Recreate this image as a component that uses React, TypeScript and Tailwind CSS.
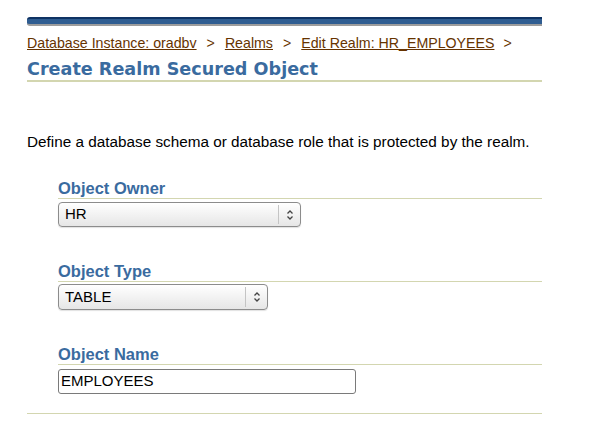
import React from 'react';

const labelCls =
    "h-[21px] border-b border-[#d3d6b0] text-[16.5px] leading-[20px] font-bold text-[#3a6b9f] font-['Liberation_Sans',Arial,sans-serif]";

function UpDown() {
    return (
        <svg width="8" height="12" viewBox="0 0 8 12" fill="none" stroke="#444" strokeWidth="1.3">
            <path d="M1.5 4.5 L4 2 L6.5 4.5" />
            <path d="M1.5 7.5 L4 10 L6.5 7.5" />
        </svg>
    );
}

function SelectBox({ value, width, height }: { value: string; width: string; height: string }) {
    return (
        <div
            className={`${width} ${height} flex items-stretch rounded-[4px] border border-[#8c8c8c] bg-gradient-to-b from-white to-[#e6e6e6] shadow-[0_1px_1px_rgba(0,0,0,0.12)]`}
        >
            <div className="flex-1 flex items-center pl-[6px] text-[15px] text-black">{value}</div>
            <div className="w-[22px] flex items-center justify-center border-l border-[#c4c4c4] my-[2px]">
                <UpDown />
            </div>
        </div>
    );
}

export default function App() {
    return (
        <div className="w-[593px] h-[429px] bg-white overflow-hidden font-['Liberation_Sans',Arial,sans-serif]">
            <div className="ml-[27px] w-[515px] pt-[17px] flex flex-col">
                {/* top bar */}
                <div className="h-[9px] border-t-2 border-t-[#0f3363] bg-[#2f5d91] border-b-2 border-b-[#9c9c9c] rounded-l-[3px]" />

                {/* breadcrumb */}
                <div className="mt-[9px] flex items-center text-[14.2px] leading-[17px] text-[#663300]">
                    <span className="underline">Database Instance: oradbv</span>
                    <span className="mx-[10px]">&gt;</span>
                    <span className="underline">Realms</span>
                    <span className="mx-[10px]">&gt;</span>
                    <span className="underline">Edit Realm: HR_EMPLOYEES</span>
                    <span className="ml-[9px]">&gt;</span>
                </div>

                {/* title */}
                <h1 className="mt-[6px] h-[24px] border-b-2 border-[#d3d6b0] text-[17.6px] leading-[22px] font-bold text-[#3a6b9f] font-['DejaVu_Sans',sans-serif]">
                    Create Realm Secured Object
                </h1>

                <p className="mt-[51px] text-[15.3px] leading-[18px] text-black">
                    Define a database schema or database role that is protected by the realm.
                </p>

                <div className="ml-[31px] flex flex-col">
                    <div className={`mt-[27px] ${labelCls}`}>Object Owner</div>
                    <div className="mt-[3px]">
                        <SelectBox value="HR" width="w-[243px]" height="h-[25px]" />
                    </div>

                    <div className={`mt-[34px] ${labelCls}`}>Object Type</div>
                    <div className="mt-[2px]">
                        <SelectBox value="TABLE" width="w-[210px]" height="h-[26px]" />
                    </div>

                    <div className={`mt-[34px] ${labelCls}`}>Object Name</div>
                    <div className="mt-[4px] w-[298px] h-[25px] rounded-[3px] border border-[#7a7a7a] flex items-center pl-[2px] text-[15px] text-black">
                        EMPLOYEES
                    </div>
                </div>

                <div className="mt-[19px] h-px bg-[#d3d6b0]" />
            </div>
        </div>
    );
}
